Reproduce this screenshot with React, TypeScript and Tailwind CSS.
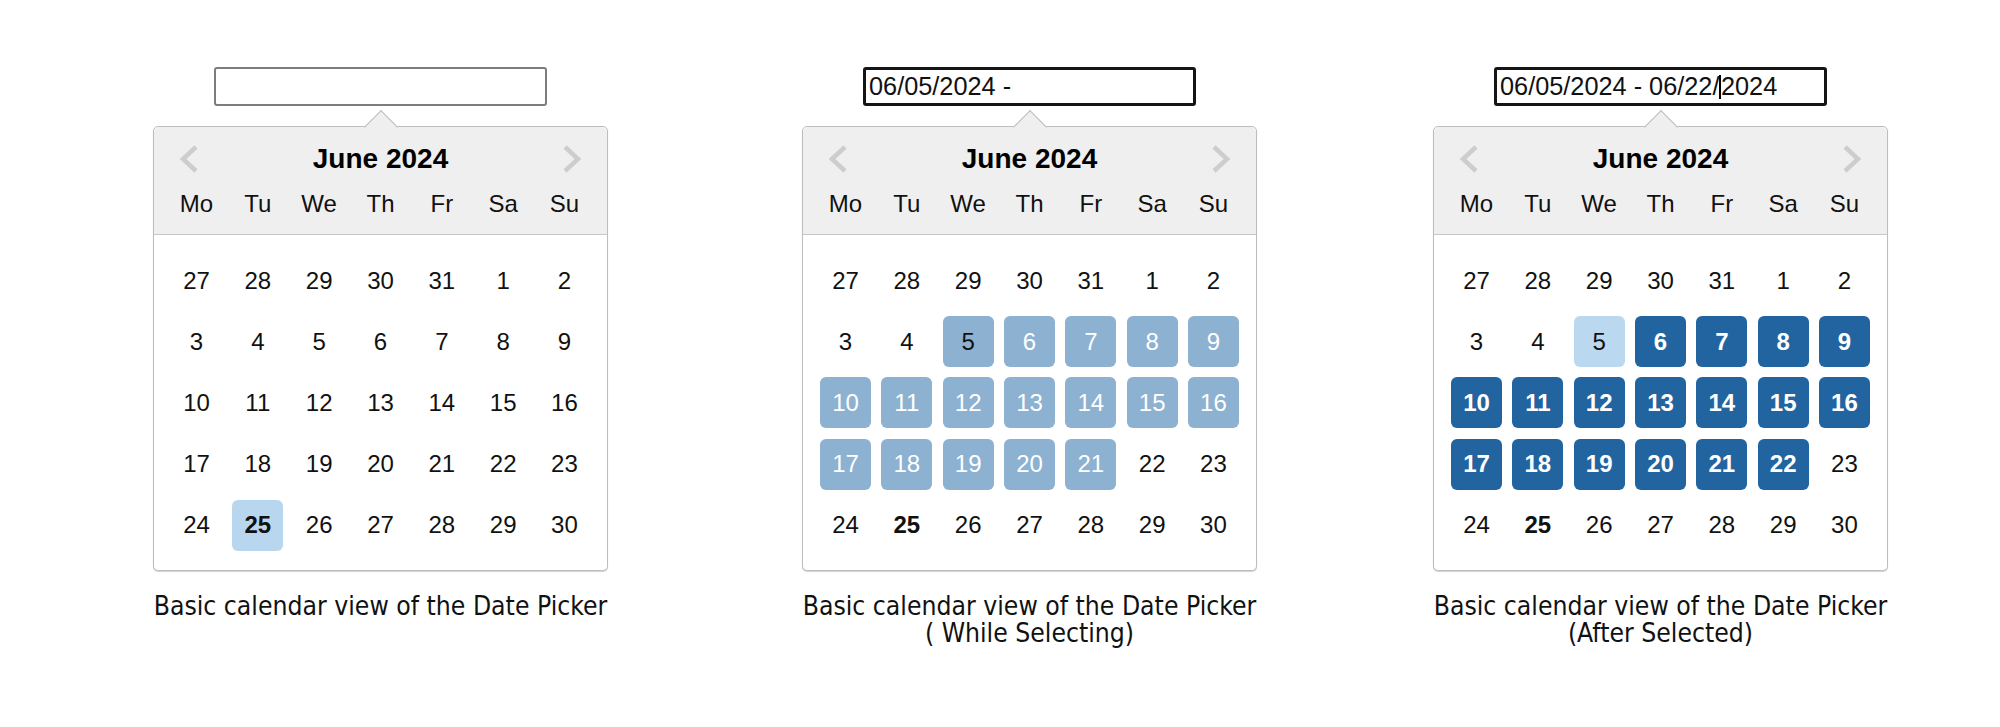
import React from "react";

type Mode = "basic" | "selecting" | "selected";

const days: number[] = [27, 28, 29, 30, 31, ...Array.from({ length: 30 }, (_, i) => i + 1)];
const weekdays = ["Mo", "Tu", "We", "Th", "Fr", "Sa", "Su"];

function cellClass(mode: Mode, d: number, idx: number): string {
  const inMonth = idx >= 5;
  const base = "h-[51px] w-[51px] flex items-center justify-center rounded-[6px] text-[24px]";
  if (inMonth) {
    if (mode === "basic" && d === 25) return base + " bg-[#b9d6ef] font-bold text-[#111]";
    if (mode === "selecting") {
      if (d === 5) return base + " bg-[#8db1d1] text-[#111]";
      if (d >= 6 && d <= 21) return base + " bg-[#8db1d1] text-white";
    }
    if (mode === "selected") {
      if (d === 5) return base + " bg-[#bbd8f1] text-[#111]";
      if (d >= 6 && d <= 22) return base + " bg-[#2264a0] text-white font-bold";
    }
    if (d === 25) return base + " font-bold text-[#111]";
  }
  return base + " text-[#111]";
}

function Chevron({ dir }: { dir: "left" | "right" }) {
  return (
    <svg width="22" height="30" viewBox="0 0 22 30" className="shrink-0">
      <polyline
        points={dir === "left" ? "18,3 5,15 18,27" : "4,3 17,15 4,27"}
        fill="none"
        stroke="#cdcdcd"
        strokeWidth="4.5"
        strokeLinecap="butt"
        strokeLinejoin="miter"
      />
    </svg>
  );
}

function Picker({ mode, value, caption }: { mode: Mode; value: React.ReactNode; caption: string[] }) {
  const dark = mode !== "basic";
  return (
    <div className="flex w-[455px] flex-col items-center">
      <div
        className={
          "flex h-[39px] w-[333px] items-center rounded-[3px] bg-white pl-[3px] text-[25.3px] text-[#111] " +
          (dark ? "border-[3px] border-[#151515]" : "border-2 border-[#7d7d7d]")
        }
        style={{ fontFamily: '"Liberation Sans", Arial, sans-serif' }}
      >
        {value}
      </div>
      <div className="relative mt-[20px] w-[455px] rounded-[5px] border border-[#bdbdbd] bg-white shadow-[0_1px_1px_rgba(0,0,0,0.18)]">
        <div className="absolute left-1/2 -top-[17px] h-[18px] w-[36px] -translate-x-1/2 overflow-hidden">
          <div className="absolute left-1/2 top-[5px] h-[24px] w-[24px] -translate-x-1/2 rotate-45 border-l border-t border-[#bdbdbd] bg-[#efefef]" />
        </div>
        <div className="rounded-t-[5px] border-b border-[#c6c6c6] bg-[#efefef] px-[17px] pb-[16px] pt-[16px]">
          <div className="flex items-center justify-between px-[7px]">
            <Chevron dir="left" />
            <div className="text-[28px] font-bold leading-[32px] text-black">June 2024</div>
            <Chevron dir="right" />
          </div>
          <div className="mt-[15px] grid grid-cols-[repeat(7,51px)] gap-x-[10.33px]">
            {weekdays.map((w) => (
              <div key={w} className="text-center text-[24px] leading-[28px] text-[#111]">
                {w}
              </div>
            ))}
          </div>
        </div>
        <div className="grid grid-cols-[repeat(7,51px)] gap-x-[10.33px] gap-y-[10.2px] px-[17px] pb-[19px] pt-[20px]">
          {days.map((d, i) => (
            <div key={i} className={cellClass(mode, d, i)}>
              {d}
            </div>
          ))}
        </div>
      </div>
      <div
        className="mt-[22px] text-center text-[26.3px] leading-[27px] text-[#111]"
        style={{ fontFamily: '"DejaVu Sans Condensed", "DejaVu Sans", sans-serif' }}
      >
        {caption.map((c) => (
          <div key={c}>{c}</div>
        ))}
      </div>
    </div>
  );
}

export default function App() {
  return (
    <div
      className="h-[727px] w-[2000px] bg-white pl-[153px] pt-[67px]"
      style={{ fontFamily: '"Liberation Sans", Arial, sans-serif' }}
    >
      <div className="flex items-start">
        <Picker mode="basic" value={null} caption={["Basic calendar view of the Date Picker"]} />
        <div className="ml-[194px]">
          <Picker
            mode="selecting"
            value={<span>06/05/2024 -</span>}
            caption={["Basic calendar view of the Date Picker", "( While Selecting)"]}
          />
        </div>
        <div className="ml-[176px]">
          <Picker
            mode="selected"
            value={
              <span className="flex items-center">
                <span>06/05/2024 - 06/22/</span>
                <span className="h-[24px] w-[1.5px] bg-black" />
                <span>2024</span>
              </span>
            }
            caption={["Basic calendar view of the Date Picker", "(After Selected)"]}
          />
        </div>
      </div>
    </div>
  );
}
